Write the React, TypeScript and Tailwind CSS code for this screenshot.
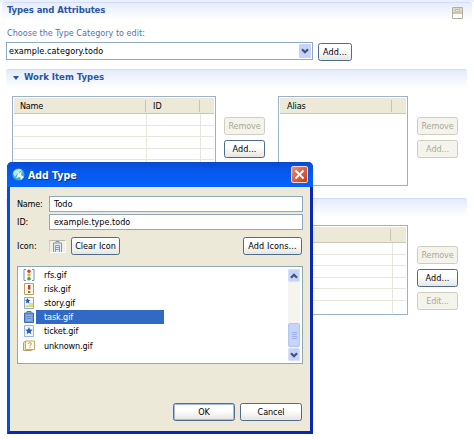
import { ReactNode } from "react";
import clsx from "clsx";

interface ButtonProps {
  children: ReactNode;
  className?: string;
  disabled?: boolean;
  primary?: boolean;
}

interface IconFile {
  name: string;
  icon: ReactNode;
  selected?: boolean;
}

function Button({ children, className, disabled, primary }: ButtonProps) {
  return (
    <button
      disabled={disabled}
      className={clsx(
        "flex h-[18px] shrink-0 items-center justify-center rounded-[2.5px] border whitespace-nowrap",
        disabled
          ? "border-[#cfcdbe] bg-[#f5f4ec] tracking-[-0.1px] text-[#a9a899]"
          : "border-[#4f6b8d] bg-linear-to-b from-white from-40% to-[#e6e5df] text-black",
        primary && "shadow-[inset_0_0_0_1px_#a3bdf0]",
        className
      )}
    >
      {children}
    </button>
  );
}

function SectionHeader({ children, className }: { children?: ReactNode; className?: string }) {
  return (
    <div
      className={clsx(
        "flex h-[19px] w-[461px] rounded-t-[3px] border-t border-[#cfdaf3] bg-linear-to-b from-[#e4ebfb] to-white font-bold text-[#2a56a5]",
        className
      )}
    >
      {children}
    </div>
  );
}

function Chevron({ up }: { up?: boolean }) {
  return (
    <svg width="8" height="6" viewBox="0 0 8 6" fill="none" stroke="#3e5480" strokeWidth="2.2">
      <path d={up ? "M1 4.8 4 1.8 7 4.8" : "M1 1.2 4 4.2 7 1.2"} />
    </svg>
  );
}

function HeadRow({ children }: { children: ReactNode }) {
  return (
    <div className="flex h-[16px] shrink-0 items-center border-b border-[#cbc7b8] bg-[#ece9d8]">{children}</div>
  );
}

function Divider() {
  return <div className="h-[12px] w-px shrink-0 bg-[#c6c3b2]" />;
}

const iconFiles: IconFile[] = [
  {
    name: "rfs.gif",
    icon: (
      <>
        <path d="M3 .5H1v11h2M9 .5h2v11H9" fill="none" stroke="#6d93c4" />
        <circle cx="6" cy="2.2" r="1.8" fill="#d8403a" />
        <circle cx="6" cy="6" r="1.8" fill="#e4b62b" />
        <circle cx="6" cy="9.8" r="1.8" fill="#3f9e48" />
      </>
    ),
  },
  {
    name: "risk.gif",
    icon: (
      <>
        <path d="M1.5 .5h9v11h-9z" fill="#fff9e8" stroke="#c09a60" />
        <path d="M5 2h2.4v4.6H5z" fill="#c63d32" />
        <path d="M5 8h2.4v2H5z" fill="#6b8a38" />
      </>
    ),
  },
  {
    name: "story.gif",
    icon: (
      <>
        <path d="M1.5 .5h9v11h-9z" fill="#f1f6fd" stroke="#8aabd6" />
        <path d="M4.5 1 5.3 2.8l2 .2-1.5 1.4.5 2-1.8-.9L3 6.4l.5-2L2 3l1.7-.2z" fill="#2f579e" />
        <path d="M6 6.2h4v1.6H6zM2.5 8.3h7.5V10H2.5z" fill="#d7d965" />
      </>
    ),
  },
  {
    name: "task.gif",
    selected: true,
    icon: (
      <>
        <path d="M1.5 2h9v9.5h-9z" fill="#6f9bda" stroke="#3c6cb8" />
        <path d="M4 2V.5h4V2" fill="#8fa9cc" stroke="#4e75ae" />
        <path d="M3.5 4h5v6h-5z" fill="#8fb2e5" />
        <path d="M4 5.5h4M4 7.5h4" stroke="#5e8bcc" />
      </>
    ),
  },
  {
    name: "ticket.gif",
    icon: (
      <>
        <path d="M1.5 .5h9v11h-9z" fill="#eff6ff" stroke="#91b4df" />
        <path d="m6 2 1.1 2.5 2.6.2-2 1.8.6 2.7L6 7.8 3.7 9.2l.6-2.7-2-1.8 2.6-.2z" fill="#285fab" />
      </>
    ),
  },
  {
    name: "unknown.gif",
    icon: (
      <>
        <path d="M2.5 1 .5 2.5v8h8l2-1.5" fill="#f5e7ba" stroke="#b7a16e" />
        <path d="M2.5 1h9v8.5h-9z" fill="#fffbea" stroke="#c1a970" />
        <path d="M5.5 3.8c0-1.6 3-1.5 2.8.1C8.2 5 7 4.9 7 6.3M7 7.2v1" fill="none" stroke="#c28b28" />
      </>
    ),
  },
];

function AddTypeDialog() {
  return (
    <div className="absolute top-[162px] left-[7px] flex h-[272px] w-[306px] flex-col rounded-t-[5px] border-x-[3px] border-b-[3px] border-t-0 border-r-[#0727b4] border-b-[#0727b4] border-l-[#0c48dc] bg-[#ece9d8]">
      <div className="-mx-[3px] flex h-[25px] shrink-0 items-center rounded-t-[5px] bg-linear-to-b from-[#0a48cf] via-[#0557ea] via-30% to-[#0463fb] pr-[5px] pl-[5px]">
        <svg width="13" height="13" viewBox="0 0 13 13">
          <circle cx="6.5" cy="6.5" r="6" fill="#41b1c4" />
          <path d="M1 5c2-4 6-5 9-3L7 4l1 3-3-1-2 3z" fill="#b9eadb" />
          <path d="m6 6 4-3-1 4 3 2-3 3-1-3-4 1z" fill="#eafaf5" />
        </svg>
        <span className="ml-[3px] text-[10.5px] font-bold text-white [text-shadow:1px_1px_#0a2f8c]">
          Add Type
        </span>
        <div className="ml-auto flex h-[17px] w-[17px] items-center justify-center rounded-[2px] border border-[#f2d9d4] bg-linear-to-br from-[#ed8b6f] to-[#c93416]">
          <svg width="11" height="11" viewBox="0 0 11 11" stroke="#fff" strokeWidth="1.8">
            <path d="m1.5 1.5 8 8M9.5 1.5l-8 8" />
          </svg>
        </div>
      </div>

      <div className="flex grow flex-col px-[7px]">
        <div className="mt-[9px] flex h-[16px] items-center">
          <span className="w-[32px] tracking-[-0.2px]">Name:</span>
          <div className="flex h-[16px] grow items-center border border-[#8fa9c4] bg-white pl-[4px]">Todo</div>
        </div>
        <div className="mt-[2px] flex h-[16px] items-center">
          <span className="w-[32px]">ID:</span>
          <div className="flex h-[16px] grow items-center border border-[#8fa9c4] bg-white pl-[4px]">
            example.type.todo
          </div>
        </div>
        <div className="mt-[7px] flex h-[18px] items-center">
          <span className="w-[32px]">Icon:</span>
          <div className="flex h-[13px] w-[17px] justify-center border border-t-[#bdb9a8] border-r-white border-b-white border-l-[#d5d1c2] bg-[#f1efe4]">
            <svg width="11" height="11" viewBox="0 0 11 11" fill="none">
              <path d="M1.5 11V2h8v9" fill="#dfe7f3" stroke="#8299c1" />
              <path d="M4 2V.5h3V2M3.5 11V4.5h4V11M4 6.5h3M4 8.5h3" stroke="#829bc4" />
            </svg>
          </div>
          <Button className="ml-[5px] w-[49px]">Clear Icon</Button>
          <Button className="mr-[1px] ml-auto w-[59px] tracking-[0.1px]">Add Icons...</Button>
        </div>

        <div className="mt-[11px] flex h-[98px] justify-between border border-[#8fa9b4] bg-white pr-[2px]">
          <div className="mt-[1px] pl-[5px]">
            {iconFiles.map((file) => (
              <div key={file.name} className="flex h-[14.1px] items-center">
                <svg width="12" height="12" viewBox="0 0 12 12">
                  {file.icon}
                </svg>
                <div
                  className={clsx(
                    "ml-[1px] flex h-[14px] w-[128px] items-center pl-[8px] tracking-[-0.1px]",
                    file.selected && "bg-[#316ac5] text-white"
                  )}
                >
                  {file.name}
                </div>
              </div>
            ))}
          </div>
          <div className="my-[2px] flex w-[12px] flex-col bg-[#f5f4ef]">
            <div className="flex h-[13px] items-center justify-center rounded-[2px] border border-[#d8e0f8] bg-[#c6d4fa]">
              <Chevron up />
            </div>
            <div className="mt-auto flex h-[24px] flex-col items-center justify-center gap-px rounded-[2px] border border-[#b4c4ec] bg-[#c6d4fb]">
              <i className="h-px w-[5px] bg-[#9bb1ea]" />
              <i className="h-px w-[5px] bg-[#9bb1ea]" />
              <i className="h-px w-[5px] bg-[#9bb1ea]" />
              <i className="h-px w-[5px] bg-[#9bb1ea]" />
            </div>
            <div className="mt-px flex h-[13px] items-center justify-center rounded-[2px] border border-[#d8e0f8] bg-[#c6d4fa]">
              <Chevron />
            </div>
          </div>
        </div>

        <div className="mt-[39px] mr-[1px] flex justify-end gap-[5px]">
          <Button primary className="w-[62px]">OK</Button>
          <Button className="w-[62px] tracking-[-0.1px]">Cancel</Button>
        </div>
      </div>
    </div>
  );
}

export default function App() {
  return (
    <div className="relative h-[440px] w-[474px] overflow-hidden bg-white font-['DejaVu_Sans_Condensed','DejaVu_Sans',sans-serif] text-[9px] leading-[12px] text-black">
      <div className="h-[2px] bg-[#e8effd]" />
      <div className="mx-[2px] flex h-[18px] items-start justify-between rounded-t-[3px] border-t border-[#d3def6] bg-linear-to-b from-[#e6edfc] to-white pr-[9px] pl-[5px]">
        <span className="mt-[1px] text-[9.5px] font-bold tracking-[-0.1px] text-[#2a56a5]">Types and Attributes</span>
        <svg className="mt-[4px]" width="11" height="12" viewBox="0 0 11 12">
          <path d="M.5 .5h10v11H.5z" fill="#fff" stroke="#b3ad9c" />
          <path d="M1 1h9v4.5H1z" fill="#ddd9c9" />
          <path d="M.5 6h10" stroke="#a49c7c" />
          <path d="M3.5 2.5h4v1.5h-4z" fill="#fff" stroke="#9a9a93" strokeWidth=".6" />
        </svg>
      </div>

      <div className="mt-[7px] ml-[7px] text-[#4f74b4]">Choose the Type Category to edit:</div>
      <div className="mt-[3px] ml-[6px] flex h-[18px]">
        <div className="flex h-[18px] w-[307px] items-center justify-between border border-[#8fa9c4] bg-white pr-[1px] pl-[2px]">
          <span className="tracking-[0.08px]">example.category.todo</span>
          <div className="flex h-[14px] w-[12px] items-center justify-center rounded-[1px] bg-[#c6d4fa]">
            <Chevron />
          </div>
        </div>
        <Button className="mt-[1px] ml-[5px] w-[34px] tracking-[0.1px]">Add...</Button>
      </div>

      <SectionHeader className="mt-[9px] ml-[6px] text-[9.5px]">
        <svg className="mt-[6px] ml-[7px]" width="6" height="4" viewBox="0 0 6 4">
          <path d="M0 0h6L3 4z" fill="#2a56a5" />
        </svg>
        <span className="mt-[1px] ml-[5px]">Work Item Types</span>
      </SectionHeader>

      <div className="mt-[8px] ml-[12px] flex h-[90px]">
        <div className="flex w-[204px] flex-col border border-[#9bb0c9] p-px">
          <HeadRow>
            <span className="w-[131px] pl-[6px] tracking-[-0.2px]">Name</span>
            <Divider />
            <span className="w-[53px] pl-[7px]">ID</span>
            <Divider />
          </HeadRow>
          {[0, 1, 2, 3, 4].map((row) => (
            <div key={row} className="flex h-[11.6px] border-b border-[#e9e7dc]">
              <div className="w-[133px] border-r border-[#e9e7dc]" />
              <div className="w-[54px] border-r border-[#e9e7dc]" />
            </div>
          ))}
        </div>
        <div className="mt-[21px] ml-[8px] flex flex-col gap-[5px]">
          <Button disabled className="w-[41px]">Remove</Button>
          <Button className="w-[41px] tracking-[0.1px]">Add...</Button>
        </div>
        <div className="ml-[13px] flex w-[130px] flex-col border border-[#9bb0c9] p-px">
          <HeadRow>
            <span className="w-[111px] pl-[7px] tracking-[-0.1px]">Alias</span>
            <Divider />
          </HeadRow>
        </div>
        <div className="mt-[21px] ml-[9px] flex flex-col gap-[5px]">
          <Button disabled className="w-[41px]">Remove</Button>
          <Button disabled className="w-[41px]">Add...</Button>
        </div>
      </div>

      <SectionHeader className="mt-[12px] ml-[6px]" />
      <div className="mt-[8px] ml-[12px] flex h-[90px]">
        <div className="flex w-[396px] flex-col border border-[#9bb0c9] p-px">
          <HeadRow>
            <span className="w-[376px]" />
            <Divider />
          </HeadRow>
          {[0, 1, 2, 3, 4].map((row) => (
            <div key={row} className="flex h-[11.6px] shrink-0 border-b border-[#e9e7dc]">
              <div className="w-[379px] border-r border-[#e9e7dc]" />
            </div>
          ))}
          <div className="w-[379px] grow border-r border-[#e9e7dc]" />
        </div>
        <div className="mt-[21px] ml-[9px] flex flex-col gap-[5px]">
          <Button disabled className="w-[41px]">Remove</Button>
          <Button className="w-[41px] tracking-[0.1px]">Add...</Button>
          <Button disabled className="w-[41px]">Edit...</Button>
        </div>
      </div>

      <AddTypeDialog />
    </div>
  );
}
